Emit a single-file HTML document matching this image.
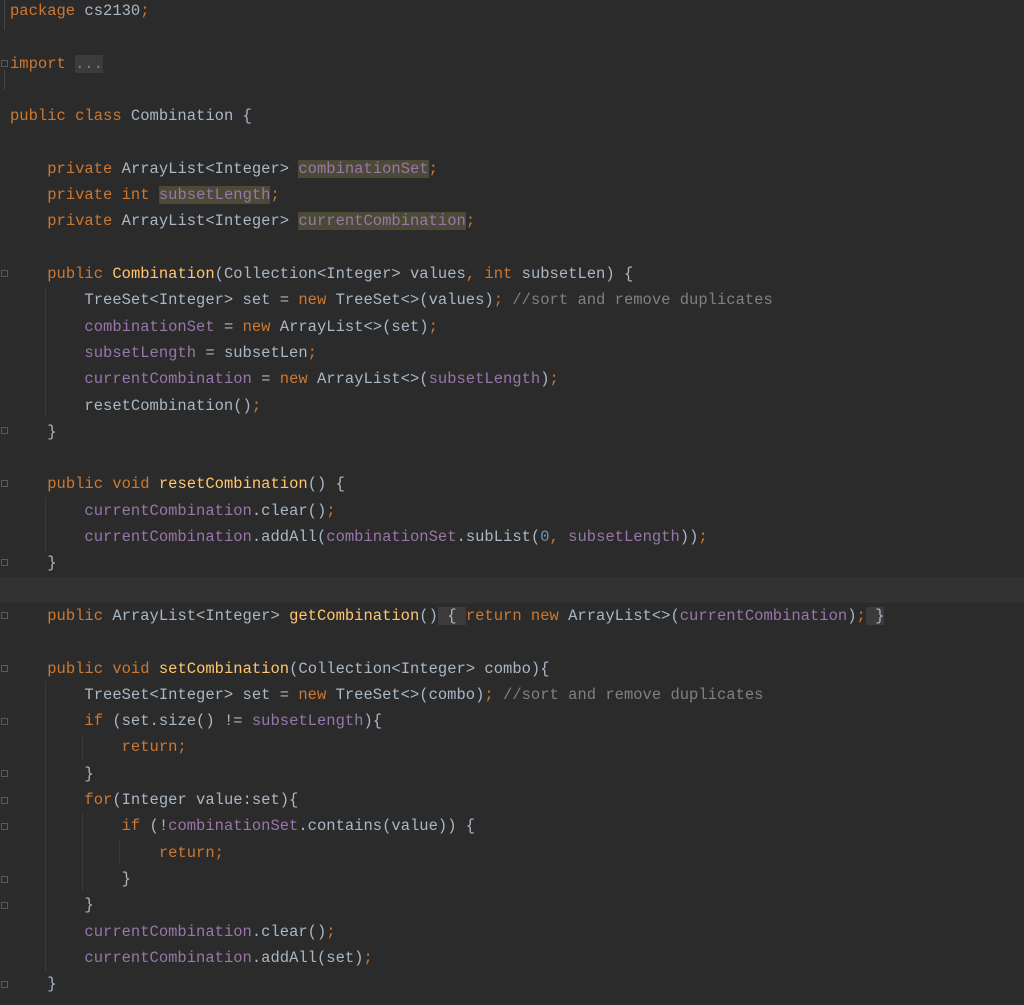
<!DOCTYPE html>
<html><head><meta charset="utf-8"><style>
html,body{margin:0;padding:0;background:#2b2b2b;width:1024px;height:1005px;overflow:hidden;position:relative}
.l{position:absolute;left:10px;height:26.3px;line-height:26.3px;font-family:"Liberation Mono",monospace;font-size:15.5px;color:#a9b7c6;white-space:pre}
.k{color:#cc7832}.f{color:#9876aa}.m{color:#ffc66d}.c{color:#808080}.n{color:#6897bb}
.h{background:#4b4a36}
.b{background:#3b3b3b}
.cur{position:absolute;left:0;width:1024px;top:577px;height:26px;background:#323232}
.g{position:absolute;width:1px;background:#393939}
.fm{position:absolute;left:1px;width:7px;height:7px;border:1px solid #5a5a5a;box-sizing:border-box}
.gl{position:absolute;left:4px;width:1px;background:#444}
</style></head><body>
<div class="cur"></div>
<div class="gl" style="top:0;height:30px"></div>
<div class="gl" style="top:70px;height:20px"></div>
<div class="g" style="left:45px;top:287px;height:130px"></div>
<div class="g" style="left:45px;top:497px;height:55px"></div>
<div class="g" style="left:45px;top:682px;height:290px"></div>
<div class="g" style="left:82px;top:735px;height:25px"></div>
<div class="g" style="left:82px;top:813px;height:78px"></div>
<div class="g" style="left:119px;top:840px;height:25px"></div>
<div class="fm" style="top:60px"></div>
<div class="fm" style="top:270px"></div><div class="fm" style="top:427px"></div>
<div class="fm" style="top:480px"></div><div class="fm" style="top:559px"></div>
<div class="fm" style="top:612px"></div>
<div class="fm" style="top:665px"></div>
<div class="fm" style="top:718px"></div><div class="fm" style="top:770px"></div>
<div class="fm" style="top:797px"></div><div class="fm" style="top:823px"></div>
<div class="fm" style="top:876px"></div><div class="fm" style="top:902px"></div>
<div class="fm" style="top:981px"></div>
<div class="l" style="top:-2px"><span class="k">package</span> cs2130<span class="k">;</span></div>
<div class="l" style="top:50.6px"><span class="k">import</span> <span class="b c">...</span></div>
<div class="l" style="top:103.2px"><span class="k">public class</span> Combination {</div>
<div class="l" style="top:155.8px">    <span class="k">private</span> ArrayList&lt;Integer&gt; <span class="f h">combinationSet</span><span class="k">;</span></div>
<div class="l" style="top:182.1px">    <span class="k">private int</span> <span class="f h">subsetLength</span><span class="k">;</span></div>
<div class="l" style="top:208.4px">    <span class="k">private</span> ArrayList&lt;Integer&gt; <span class="f h">currentCombination</span><span class="k">;</span></div>
<div class="l" style="top:261px">    <span class="k">public</span> <span class="m">Combination</span>(Collection&lt;Integer&gt; values<span class="k">, int</span> subsetLen) {</div>
<div class="l" style="top:287.3px">        TreeSet&lt;Integer&gt; set = <span class="k">new</span> TreeSet&lt;&gt;(values)<span class="k">;</span> <span class="c">//sort and remove duplicates</span></div>
<div class="l" style="top:313.6px">        <span class="f">combinationSet</span> = <span class="k">new</span> ArrayList&lt;&gt;(set)<span class="k">;</span></div>
<div class="l" style="top:339.9px">        <span class="f">subsetLength</span> = subsetLen<span class="k">;</span></div>
<div class="l" style="top:366.2px">        <span class="f">currentCombination</span> = <span class="k">new</span> ArrayList&lt;&gt;(<span class="f">subsetLength</span>)<span class="k">;</span></div>
<div class="l" style="top:392.5px">        resetCombination()<span class="k">;</span></div>
<div class="l" style="top:418.8px">    }</div>
<div class="l" style="top:471.4px">    <span class="k">public void</span> <span class="m">resetCombination</span>() {</div>
<div class="l" style="top:497.7px">        <span class="f">currentCombination</span>.clear()<span class="k">;</span></div>
<div class="l" style="top:524px">        <span class="f">currentCombination</span>.addAll(<span class="f">combinationSet</span>.subList(<span class="n">0</span><span class="k">,</span> <span class="f">subsetLength</span>))<span class="k">;</span></div>
<div class="l" style="top:550.3px">    }</div>
<div class="l" style="top:602.9px">    <span class="k">public</span> ArrayList&lt;Integer&gt; <span class="m">getCombination</span>()<span class="b"> { </span><span class="k">return new</span> ArrayList&lt;&gt;(<span class="f">currentCombination</span>)<span class="k">;</span><span class="b"> }</span></div>
<div class="l" style="top:655.5px">    <span class="k">public void</span> <span class="m">setCombination</span>(Collection&lt;Integer&gt; combo){</div>
<div class="l" style="top:681.8px">        TreeSet&lt;Integer&gt; set = <span class="k">new</span> TreeSet&lt;&gt;(combo)<span class="k">;</span> <span class="c">//sort and remove duplicates</span></div>
<div class="l" style="top:708.1px">        <span class="k">if</span> (set.size() != <span class="f">subsetLength</span>){</div>
<div class="l" style="top:734.4px">            <span class="k">return;</span></div>
<div class="l" style="top:760.7px">        }</div>
<div class="l" style="top:787px">        <span class="k">for</span>(Integer value:set){</div>
<div class="l" style="top:813.3px">            <span class="k">if</span> (!<span class="f">combinationSet</span>.contains(value)) {</div>
<div class="l" style="top:839.6px">                <span class="k">return;</span></div>
<div class="l" style="top:865.9px">            }</div>
<div class="l" style="top:892.2px">        }</div>
<div class="l" style="top:918.5px">        <span class="f">currentCombination</span>.clear()<span class="k">;</span></div>
<div class="l" style="top:944.8px">        <span class="f">currentCombination</span>.addAll(set)<span class="k">;</span></div>
<div class="l" style="top:971.1px">    }</div>
</body></html>
